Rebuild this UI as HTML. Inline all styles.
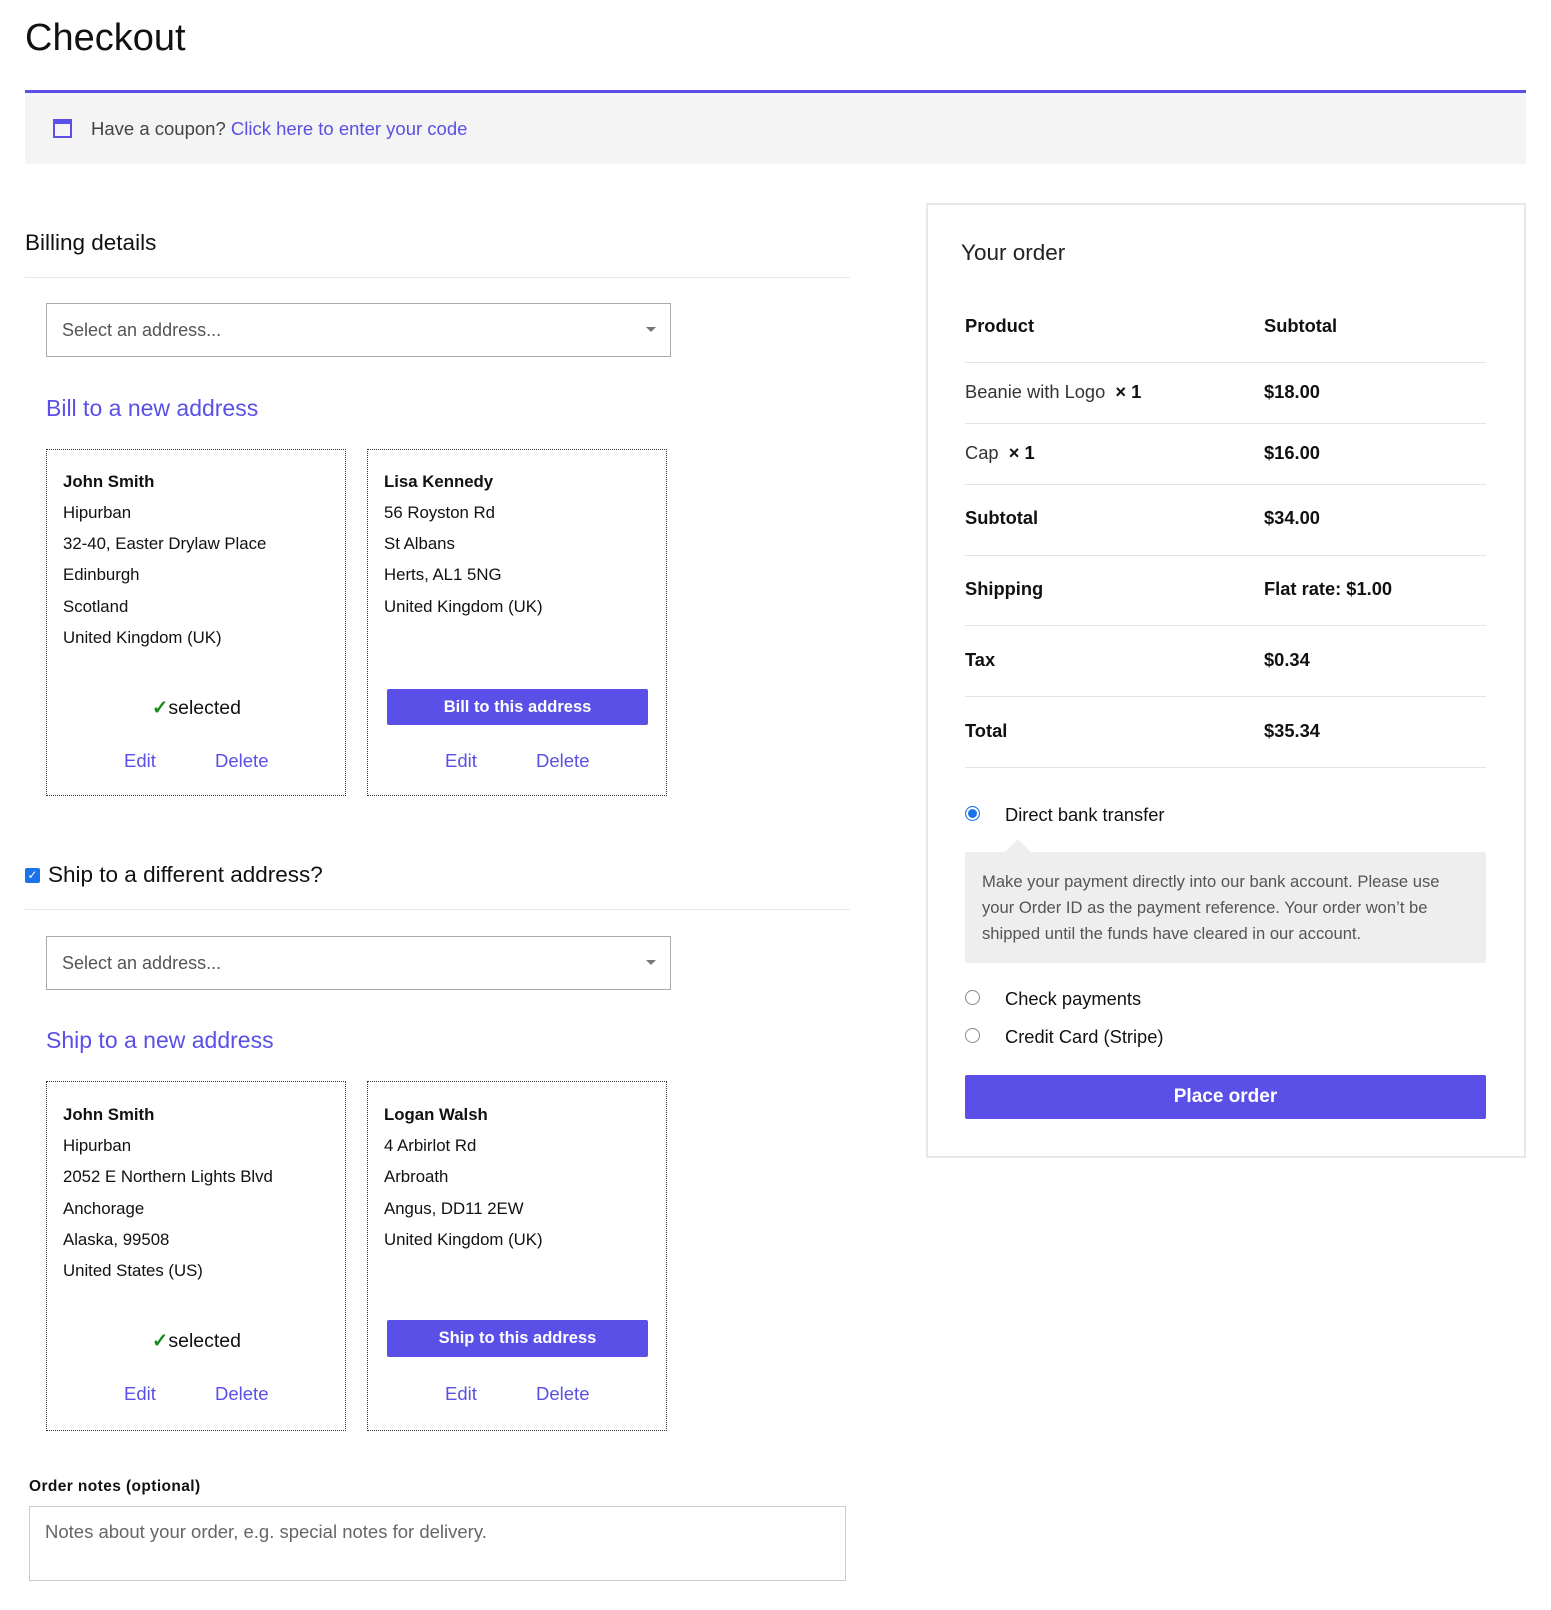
<!DOCTYPE html>
<html><head><meta charset="utf-8"><style>
*{box-sizing:border-box;margin:0;padding:0}
body{width:1551px;height:1610px;position:relative;background:#fff;font-family:"Liberation Sans",Arial,sans-serif;color:#111;overflow:hidden}
.a{position:absolute;white-space:nowrap}
.lk{color:#5a4fe6}
.card{position:absolute;width:300px;height:347px;border:1px dotted #333}
.card .l{position:absolute;left:16px;font-size:16.8px;line-height:20px}
.card .b{font-weight:bold}
.btn{position:absolute;background:#5a50e8;color:#fff;font-weight:bold;text-align:center;border-radius:2px}
.sel{position:absolute;left:46px;width:625px;height:54px;border:1px solid #aaa;font-size:18px;color:#555;padding-left:15px;line-height:52px}
.sel:after{content:"";position:absolute;right:14px;top:23px;border:5px solid transparent;border-top:5px solid #777}
.hr{position:absolute;left:25px;width:825px;height:1px;background:#e6e6e6}
.rl{position:absolute;left:965px;width:521px;height:1px;background:#e4e4e4}
.t{position:absolute;font-size:18.3px;line-height:22px;white-space:nowrap}
.radio{position:absolute;left:965px;width:15px;height:15px;border-radius:50%;border:1px solid #888;background:#fff}
</style></head><body>
<div class="a" style="left:25px;top:16px;font-size:38px;line-height:44px">Checkout</div>
<div class="a" style="left:25px;top:90px;width:1501px;height:74px;background:#f4f4f4;border-top:3px solid #5a4fe6"></div>
<div class="a" style="left:53px;top:119px;width:19px;height:19px;border:2px solid #5a4fe6;border-top-width:5px"></div>
<div class="a" style="left:91px;top:118px;font-size:18.5px;line-height:22px;color:#444">Have a coupon? <span class="lk">Click here to enter your code</span></div>

<div class="a" style="left:25px;top:230px;font-size:22.5px;line-height:26px">Billing details</div>
<div class="hr" style="top:277px"></div>
<div class="sel" style="top:303px">Select an address...</div>
<div class="a lk" style="left:46px;top:395px;font-size:23px;line-height:27px">Bill to a new address</div>

<div class="card" style="left:46px;top:449px">
<div class="l b" style="top:22px">John Smith</div>
<div class="l" style="top:53px">Hipurban</div>
<div class="l" style="top:84px">32-40, Easter Drylaw Place</div>
<div class="l" style="top:115px">Edinburgh</div>
<div class="l" style="top:147px">Scotland</div>
<div class="l" style="top:178px">United Kingdom (UK)</div>
<div class="a" style="left:105px;top:246px;font-size:19.5px;line-height:24px"><span style="color:#1a8a1a;font-weight:bold">✓</span>selected</div>
<div class="a lk" style="left:77px;top:300px;font-size:18.5px">Edit</div>
<div class="a lk" style="left:168px;top:300px;font-size:18.5px">Delete</div>
</div>
<div class="card" style="left:367px;top:449px">
<div class="l b" style="top:22px">Lisa Kennedy</div>
<div class="l" style="top:53px">56 Royston Rd</div>
<div class="l" style="top:84px">St Albans</div>
<div class="l" style="top:115px">Herts, AL1 5NG</div>
<div class="l" style="top:147px">United Kingdom (UK)</div>
<div class="btn" style="left:19px;top:239px;width:261px;height:36px;line-height:36px;font-size:16.5px">Bill to this address</div>
<div class="a lk" style="left:77px;top:300px;font-size:18.5px">Edit</div>
<div class="a lk" style="left:168px;top:300px;font-size:18.5px">Delete</div>
</div>

<div class="a" style="left:25px;top:868px;width:15px;height:15px;background:#1a73e8;border-radius:2px;color:#fff;font-size:12px;line-height:15px;text-align:center">✓</div>
<div class="a" style="left:48px;top:862px;font-size:22.5px;line-height:26px">Ship to a different address?</div>
<div class="hr" style="top:909px"></div>
<div class="sel" style="top:936px">Select an address...</div>
<div class="a lk" style="left:46px;top:1027px;font-size:23px;line-height:27px">Ship to a new address</div>

<div class="card" style="left:46px;top:1081px;height:350px">
<div class="l b" style="top:23px">John Smith</div>
<div class="l" style="top:54px">Hipurban</div>
<div class="l" style="top:85px">2052 E Northern Lights Blvd</div>
<div class="l" style="top:117px">Anchorage</div>
<div class="l" style="top:148px">Alaska, 99508</div>
<div class="l" style="top:179px">United States (US)</div>
<div class="a" style="left:105px;top:247px;font-size:19.5px;line-height:24px"><span style="color:#1a8a1a;font-weight:bold">✓</span>selected</div>
<div class="a lk" style="left:77px;top:301px;font-size:18.5px">Edit</div>
<div class="a lk" style="left:168px;top:301px;font-size:18.5px">Delete</div>
</div>
<div class="card" style="left:367px;top:1081px;height:350px">
<div class="l b" style="top:23px">Logan Walsh</div>
<div class="l" style="top:54px">4 Arbirlot Rd</div>
<div class="l" style="top:85px">Arbroath</div>
<div class="l" style="top:117px">Angus, DD11 2EW</div>
<div class="l" style="top:148px">United Kingdom (UK)</div>
<div class="btn" style="left:19px;top:238px;width:261px;height:37px;line-height:37px;font-size:16.5px">Ship to this address</div>
<div class="a lk" style="left:77px;top:301px;font-size:18.5px">Edit</div>
<div class="a lk" style="left:168px;top:301px;font-size:18.5px">Delete</div>
</div>

<div class="a" style="left:29px;top:1478px;font-size:15.5px;font-weight:bold;letter-spacing:.4px">Order notes (optional)</div>
<div class="a" style="left:29px;top:1506px;width:817px;height:75px;border:1px solid #ccc;padding:14px 15px;font-size:18.5px;color:#666">Notes about your order, e.g. special notes for delivery.</div>

<div class="a" style="left:926px;top:203px;width:600px;height:955px;border:2px solid #e8e8e8"></div>
<div class="a" style="left:961px;top:240px;font-size:22.5px;line-height:26px;color:#222">Your order</div>
<div class="t" style="left:965px;top:315px;font-weight:bold">Product</div>
<div class="t" style="left:1264px;top:315px;font-weight:bold">Subtotal</div>
<div class="rl" style="top:362px"></div>
<div class="t" style="left:965px;top:381px;color:#333">Beanie with Logo &nbsp;<b style="color:#111">× 1</b></div>
<div class="t" style="left:1264px;top:381px;font-weight:bold">$18.00</div>
<div class="rl" style="top:423px"></div>
<div class="t" style="left:965px;top:442px;color:#333">Cap &nbsp;<b style="color:#111">× 1</b></div>
<div class="t" style="left:1264px;top:442px;font-weight:bold">$16.00</div>
<div class="rl" style="top:484px"></div>
<div class="t" style="left:965px;top:507px;font-weight:bold">Subtotal</div>
<div class="t" style="left:1264px;top:507px;font-weight:bold">$34.00</div>
<div class="rl" style="top:555px"></div>
<div class="t" style="left:965px;top:578px;font-weight:bold">Shipping</div>
<div class="t" style="left:1264px;top:578px;font-weight:bold">Flat rate: $1.00</div>
<div class="rl" style="top:625px"></div>
<div class="t" style="left:965px;top:649px;font-weight:bold">Tax</div>
<div class="t" style="left:1264px;top:649px;font-weight:bold">$0.34</div>
<div class="rl" style="top:696px"></div>
<div class="t" style="left:965px;top:720px;font-weight:bold">Total</div>
<div class="t" style="left:1264px;top:720px;font-weight:bold">$35.34</div>
<div class="rl" style="top:767px"></div>

<div class="radio" style="top:806px;border:1px solid #1a73e8;box-shadow:inset 0 0 0 2px #fff;background:#1a73e8"></div>
<div class="t" style="left:1005px;top:804px">Direct bank transfer</div>
<div class="a" style="left:1005px;top:839px;border:13px solid transparent;border-bottom:13px solid #eee;border-top:0"></div>
<div class="a" style="left:965px;top:852px;width:521px;height:111px;background:#eee;border-radius:2px;padding:17px 17px;font-size:16.6px;line-height:26px;color:#555;white-space:normal">Make your payment directly into our bank account. Please use your Order ID as the payment reference. Your order won’t be shipped until the funds have cleared in our account.</div>
<div class="radio" style="top:990px"></div>
<div class="t" style="left:1005px;top:988px">Check payments</div>
<div class="radio" style="top:1028px"></div>
<div class="t" style="left:1005px;top:1026px">Credit Card (Stripe)</div>
<div class="btn" style="left:965px;top:1075px;width:521px;height:44px;line-height:44px;font-size:19px">Place order</div>
</body></html>
